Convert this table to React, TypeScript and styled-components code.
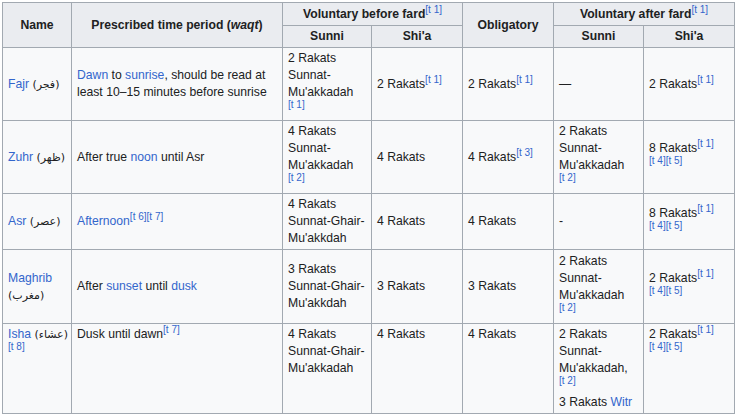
import styled, { createGlobalStyle } from 'styled-components'

const GlobalStyle = createGlobalStyle`
  html,
  body {
    margin: 0;
    padding: 0;
    background: #fff;
  }
  body {
    padding: 2px 0 0 2px;
    font-family: 'Liberation Sans', Arial, sans-serif;
    color: #202122;
  }
`

const Table = styled.table`
  width: 732px;
  table-layout: fixed;
  border-collapse: collapse;
  background-color: #f8f9fa;
  border: 1px solid #a2a9b1;
  font-size: 12.2px;
  line-height: 17px;
`

const Row = styled.tr<{ $h: number; $top?: boolean }>`
  height: ${(p) => p.$h}px;
  vertical-align: ${(p) => (p.$top ? 'top' : 'middle')};
`

const Th = styled.th`
  background-color: #eaecf0;
  border: 1px solid #a2a9b1;
  padding: 2px 4px;
  font-weight: 700;
  text-align: center;
`

const Td = styled.td`
  border: 1px solid #a2a9b1;
  padding: 2px 4px 2px 5px;
  text-align: left;
`

const A = styled.span`
  color: #3366cc;
`

const NoWrap = styled.span`
  white-space: nowrap;
`

const Arabic = styled.span`
  font-family: 'DejaVu Sans', sans-serif;
  font-size: 11px;
`

const Ref = styled.sup`
  color: #3366cc;
  font-size: 10px;
  font-weight: 400;
  line-height: 0;
  vertical-align: super;
  white-space: nowrap;
`

const r = (n: string) => <Ref>[t {n}]</Ref>

export default function App() {
  return (
    <>
      <GlobalStyle />
      <Table>
        <colgroup>
          <col style={{ width: 69 }} />
          <col style={{ width: 211 }} />
          <col style={{ width: 89 }} />
          <col style={{ width: 91 }} />
          <col style={{ width: 91 }} />
          <col style={{ width: 90 }} />
          <col style={{ width: 91 }} />
        </colgroup>
        <thead>
          <Row $h={23}>
            <Th rowSpan={2}>Name</Th>
            <Th rowSpan={2}>
              Prescribed time period (<i>waqt</i>)
            </Th>
            <Th colSpan={2}>Voluntary before fard{r('1')}</Th>
            <Th rowSpan={2}>Obligatory</Th>
            <Th colSpan={2}>Voluntary after fard{r('1')}</Th>
          </Row>
          <Row $h={21}>
            <Th>Sunni</Th>
            <Th>Shi'a</Th>
            <Th>Sunni</Th>
            <Th>Shi'a</Th>
          </Row>
        </thead>
        <tbody>
          <Row $h={73}>
            <Td>
              <NoWrap>
                <A>Fajr</A> <Arabic>(فجر)</Arabic>
              </NoWrap>
            </Td>
            <Td>
              <A>Dawn</A> to <A>sunrise</A>, should be read at least 10–15 minutes before sunrise
            </Td>
            <Td>2 Rakats Sunnat-Mu'akkadah {r('1')}</Td>
            <Td>2 Rakats{r('1')}</Td>
            <Td>2 Rakats{r('1')}</Td>
            <Td>—</Td>
            <Td>2 Rakats{r('1')}</Td>
          </Row>
          <Row $h={73}>
            <Td>
              <NoWrap>
                <A>Zuhr</A> <Arabic>(ظهر)</Arabic>
              </NoWrap>
            </Td>
            <Td>
              After true <A>noon</A> until Asr
            </Td>
            <Td>4 Rakats Sunnat-Mu'akkadah {r('2')}</Td>
            <Td>4 Rakats</Td>
            <Td>4 Rakats{r('3')}</Td>
            <Td>2 Rakats Sunnat-Mu'akkadah {r('2')}</Td>
            <Td>
              8 Rakats{r('1')} {r('4')}
              {r('5')}
            </Td>
          </Row>
          <Row $h={56}>
            <Td>
              <NoWrap>
                <A>Asr</A> <Arabic>(عصر)</Arabic>
              </NoWrap>
            </Td>
            <Td>
              <A>Afternoon</A>
              {r('6')}
              {r('7')}
            </Td>
            <Td>4 Rakats Sunnat-Ghair-Mu'akkdah</Td>
            <Td>4 Rakats</Td>
            <Td>4 Rakats</Td>
            <Td>-</Td>
            <Td>
              8 Rakats{r('1')} {r('4')}
              {r('5')}
            </Td>
          </Row>
          <Row $h={74}>
            <Td>
              <A>Maghrib</A> <Arabic>(مغرب)</Arabic>
            </Td>
            <Td>
              After <A>sunset</A> until <A>dusk</A>
            </Td>
            <Td>3 Rakats Sunnat-Ghair-Mu'akkdah</Td>
            <Td>3 Rakats</Td>
            <Td>3 Rakats</Td>
            <Td>2 Rakats Sunnat-Mu'akkadah {r('2')}</Td>
            <Td>
              2 Rakats{r('1')} {r('4')}
              {r('5')}
            </Td>
          </Row>
          <Row $h={88} $top>
            <Td>
              <NoWrap>
                <A>Isha</A> <Arabic>(عشاء)</Arabic>
              </NoWrap>{' '}
              {r('8')}
            </Td>
            <Td>Dusk until dawn{r('7')}</Td>
            <Td>4 Rakats Sunnat-Ghair-Mu'akkadah</Td>
            <Td>4 Rakats</Td>
            <Td>4 Rakats</Td>
            <Td>
              2 Rakats Sunnat-Mu'akkadah, {r('2')}
              <br />
              3 Rakats <A>Witr</A>
            </Td>
            <Td>
              2 Rakats{r('1')} {r('4')}
              {r('5')}
            </Td>
          </Row>
        </tbody>
      </Table>
    </>
  )
}
